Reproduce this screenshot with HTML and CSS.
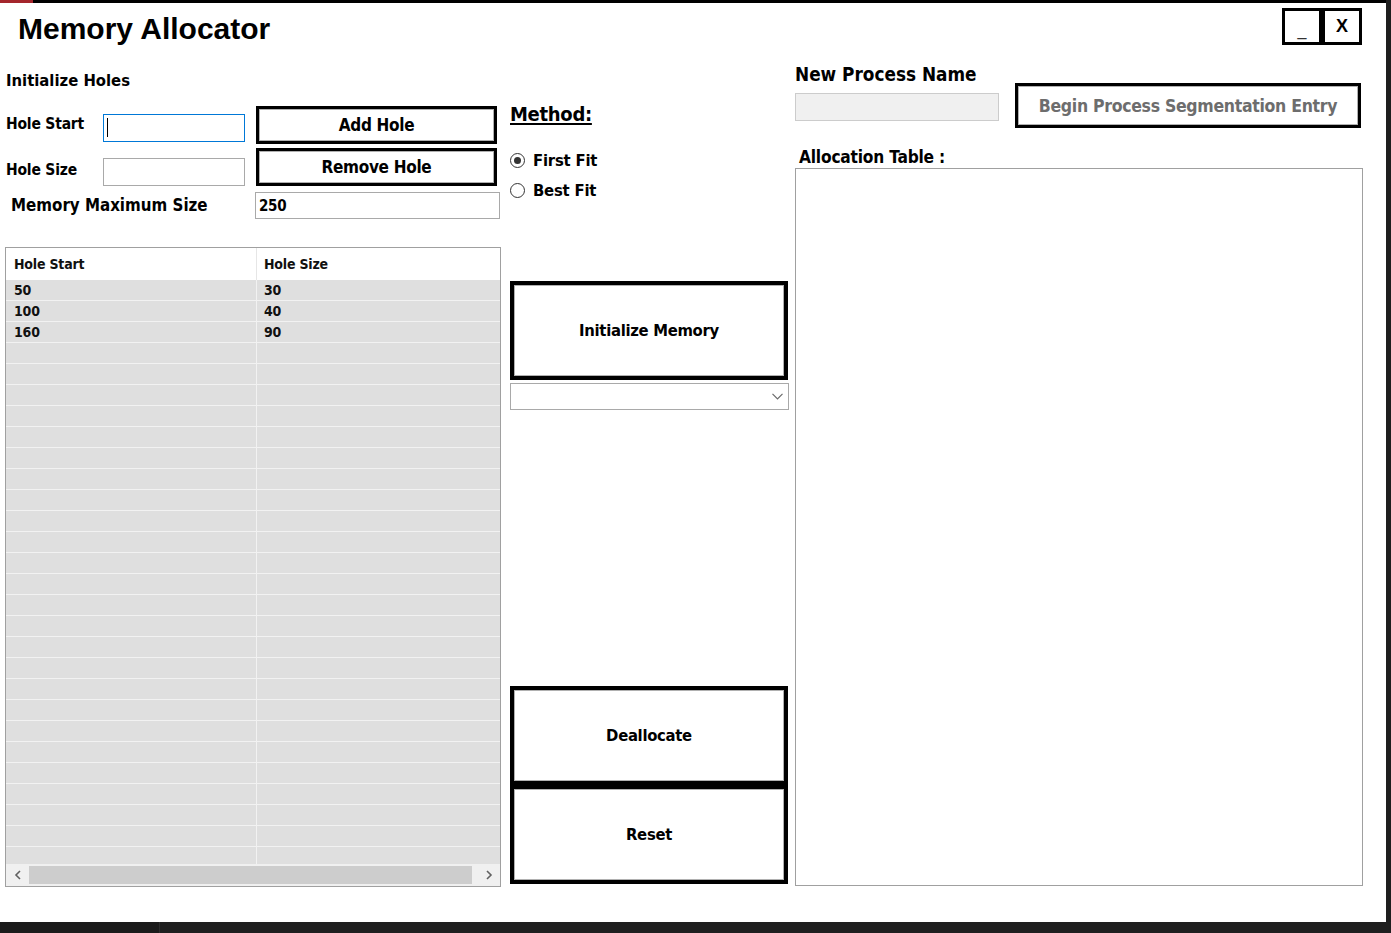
FILE: index.html
```html
<!DOCTYPE html>
<html lang="en">
<head>
<meta charset="utf-8">
<title>Memory Allocator</title>
<link rel="stylesheet" href="styles.css">
</head>
<body>
<div class="screen">
  <div class="window">
    <div class="accent"><span class="accent-red"></span></div>
    <header class="titlebar">
      <h1 class="title">Memory Allocator</h1>
      <div class="winbtns">
        <button class="winbtn">_</button>
        <button class="winbtn winbtn-close">X</button>
      </div>
    </header>
    <main class="content">
      <section class="col-left">
        <h2 class="section-title">Initialize Holes</h2>
        <div class="hole-form">
          <label class="lbl lbl-start">Hole Start</label>
          <div class="input input-start"><span class="caret"></span></div>
          <button class="btn btn-small">Add Hole</button>
          <label class="lbl lbl-size">Hole Size</label>
          <div class="input input-size"></div>
          <button class="btn btn-small">Remove Hole</button>
          <label class="lbl lbl-max">Memory Maximum Size</label>
          <div class="input input-max">250</div>
        </div>
        <div class="listview">
          <div class="lv-header">
            <div class="lv-cell lv-c1">Hole Start</div>
            <div class="lv-cell lv-c2">Hole Size</div>
          </div>
          <div class="lv-body">
            <div class="lv-row"><div class="lv-cell lv-c1">50</div><div class="lv-cell lv-c2">30</div></div>
            <div class="lv-row"><div class="lv-cell lv-c1">100</div><div class="lv-cell lv-c2">40</div></div>
            <div class="lv-row"><div class="lv-cell lv-c1">160</div><div class="lv-cell lv-c2">90</div></div>
            <div class="lv-row"><div class="lv-cell lv-c1"></div><div class="lv-cell lv-c2"></div></div>
            <div class="lv-row"><div class="lv-cell lv-c1"></div><div class="lv-cell lv-c2"></div></div>
            <div class="lv-row"><div class="lv-cell lv-c1"></div><div class="lv-cell lv-c2"></div></div>
            <div class="lv-row"><div class="lv-cell lv-c1"></div><div class="lv-cell lv-c2"></div></div>
            <div class="lv-row"><div class="lv-cell lv-c1"></div><div class="lv-cell lv-c2"></div></div>
            <div class="lv-row"><div class="lv-cell lv-c1"></div><div class="lv-cell lv-c2"></div></div>
            <div class="lv-row"><div class="lv-cell lv-c1"></div><div class="lv-cell lv-c2"></div></div>
            <div class="lv-row"><div class="lv-cell lv-c1"></div><div class="lv-cell lv-c2"></div></div>
            <div class="lv-row"><div class="lv-cell lv-c1"></div><div class="lv-cell lv-c2"></div></div>
            <div class="lv-row"><div class="lv-cell lv-c1"></div><div class="lv-cell lv-c2"></div></div>
            <div class="lv-row"><div class="lv-cell lv-c1"></div><div class="lv-cell lv-c2"></div></div>
            <div class="lv-row"><div class="lv-cell lv-c1"></div><div class="lv-cell lv-c2"></div></div>
            <div class="lv-row"><div class="lv-cell lv-c1"></div><div class="lv-cell lv-c2"></div></div>
            <div class="lv-row"><div class="lv-cell lv-c1"></div><div class="lv-cell lv-c2"></div></div>
            <div class="lv-row"><div class="lv-cell lv-c1"></div><div class="lv-cell lv-c2"></div></div>
            <div class="lv-row"><div class="lv-cell lv-c1"></div><div class="lv-cell lv-c2"></div></div>
            <div class="lv-row"><div class="lv-cell lv-c1"></div><div class="lv-cell lv-c2"></div></div>
            <div class="lv-row"><div class="lv-cell lv-c1"></div><div class="lv-cell lv-c2"></div></div>
            <div class="lv-row"><div class="lv-cell lv-c1"></div><div class="lv-cell lv-c2"></div></div>
            <div class="lv-row"><div class="lv-cell lv-c1"></div><div class="lv-cell lv-c2"></div></div>
            <div class="lv-row"><div class="lv-cell lv-c1"></div><div class="lv-cell lv-c2"></div></div>
            <div class="lv-row"><div class="lv-cell lv-c1"></div><div class="lv-cell lv-c2"></div></div>
            <div class="lv-row"><div class="lv-cell lv-c1"></div><div class="lv-cell lv-c2"></div></div>
            <div class="lv-row"><div class="lv-cell lv-c1"></div><div class="lv-cell lv-c2"></div></div>
            <div class="lv-row"><div class="lv-cell lv-c1"></div><div class="lv-cell lv-c2"></div></div>
          </div>
          <div class="hscroll">
            <span class="hs-arrow">
              <svg width="8" height="10" viewBox="0 0 8 10"><path d="M6 1 L2 5 L6 9" fill="none" stroke="#606060" stroke-width="1.6"/></svg>
            </span>
            <span class="hs-thumb"></span>
            <span class="hs-arrow hs-arrow-right">
              <svg width="8" height="10" viewBox="0 0 8 10"><path d="M2 1 L6 5 L2 9" fill="none" stroke="#606060" stroke-width="1.6"/></svg>
            </span>
          </div>
        </div>
      </section>

      <section class="col-mid">
        <h2 class="method">Method:</h2>
        <div class="radios">
          <label class="radio"><span class="radio-dot checked"></span>First Fit</label>
          <label class="radio"><span class="radio-dot"></span>Best Fit</label>
        </div>
        <button class="btn btn-big btn-init">Initialize Memory</button>
        <div class="combo">
          <svg width="11" height="7" viewBox="0 0 11 7"><path d="M0.5 0.8 L5.5 5.8 L10.5 0.8" fill="none" stroke="#6a6a6a" stroke-width="1.2"/></svg>
        </div>
        <button class="btn btn-big btn-dealloc">Deallocate</button>
        <button class="btn btn-big">Reset</button>
      </section>

      <section class="col-right">
        <div class="process-row">
          <div class="process-name">
            <label class="lbl lbl-process">New Process Name</label>
            <div class="input input-disabled"></div>
          </div>
          <button class="btn btn-begin">Begin Process Segmentation Entry</button>
        </div>
        <h2 class="alloc-title">Allocation Table :</h2>
        <div class="alloc-box"></div>
      </section>
    </main>
  </div>
  <div class="taskbar"><span class="task-left"></span><span class="task-right"></span></div>
</div>
</body>
</html>
```

FILE: styles.css
```css
* { box-sizing: border-box; }

html, body {
  margin: 0;
  padding: 0;
  background: #1e1e1e;
}

body {
  width: 1391px;
  height: 933px;
  overflow: hidden;
  font-family: "DejaVu Sans Condensed", "DejaVu Sans", sans-serif;
  font-stretch: condensed;
  font-weight: bold;
  color: #000;
}

.screen {
  display: flex;
  flex-direction: column;
  width: 1391px;
  height: 933px;
}

.window {
  width: 1386px;
  height: 922px;
  background: #fff;
  display: flex;
  flex-direction: column;
}

.accent {
  height: 3px;
  background: #000;
  display: flex;
}
.accent-red {
  width: 33px;
  height: 3px;
  background: #a4262c;
}

.titlebar {
  height: 55px;
  display: flex;
  align-items: flex-start;
  justify-content: space-between;
  padding-left: 18px;
  padding-right: 24px;
}

.title {
  margin: 9px 0 0 0;
  font-family: "Liberation Sans", Arial, sans-serif;
  font-stretch: normal;
  font-weight: bold;
  font-size: 30px;
  line-height: 34px;
  color: #000;
}

.winbtns {
  display: flex;
  margin-top: 5px;
}

.winbtn {
  width: 40px;
  height: 37px;
  border: 3px solid #000;
  background: #fff;
  padding: 0;
  font-family: "Liberation Sans", Arial, sans-serif;
  font-stretch: normal;
  font-weight: bold;
  font-size: 18px;
  color: #000;
  display: flex;
  align-items: center;
  justify-content: center;
}
.winbtn:first-child {
  font-weight: normal;
  font-size: 16px;
  padding-top: 8px;
  color: #333;
}

.content {
  flex: 1;
  display: flex;
  padding-left: 5px;
}

/* left column */
.col-left {
  width: 496px;
  display: flex;
  flex-direction: column;
}

.section-title {
  margin: 13px 0 0 1px;
  font-size: 16.5px;
  line-height: 20px;
  font-weight: bold;
  letter-spacing: 0;
}

.hole-form {
  margin: 15px 0 0 1px;
  display: grid;
  grid-template-columns: 97px 142px 11px 241px;
  grid-template-rows: 38px 38px 29px;
  row-gap: 4px;
}

.lbl {
  font-size: 15.5px;
  line-height: 20px;
  letter-spacing: -0.2px;
}
.lbl-start { grid-column: 1; grid-row: 1; align-self: center; margin-bottom: 2px; }
.lbl-size { grid-column: 1; grid-row: 2; align-self: center; margin-top: 6px; }
.lbl-max {
  grid-column: 1 / 3;
  grid-row: 3;
  align-self: start;
  margin: 5px 0 0 5px;
  font-size: 16.8px;
  letter-spacing: 0;
  white-space: nowrap;
}

.input {
  height: 28px;
  border: 1px solid #a9a9a9;
  background: #fff;
}
.input-start {
  grid-column: 2; grid-row: 1;
  align-self: end;
  margin-bottom: 2px;
  border-color: #0078d7;
  padding: 3px 0 0 3px;
}
.caret {
  display: block;
  width: 1px;
  height: 19px;
  background: #000;
}
.input-size { grid-column: 2; grid-row: 2; align-self: end; }
.input-max {
  grid-column: 3 / 5;
  grid-row: 3;
  margin: 2px 0 0 10px;
  width: 245px;
  height: 27px;
  font-size: 15px;
  line-height: 27px;
  padding-left: 3px;
  letter-spacing: -0.3px;
}

.btn {
  border: 3px solid #000;
  background: #fff;
  font-family: inherit;
  font-stretch: condensed;
  font-weight: bold;
  color: #000;
  padding: 0;
  box-shadow: inset 0 0 0 1px #b0b0b0;
  letter-spacing: -0.3px;
}
.btn-small {
  grid-column: 4;
  height: 38px;
  font-size: 17px;
}

.listview {
  margin-top: 28px;
  width: 496px;
  height: 640px;
  border: 1px solid #a0a0a0;
  display: flex;
  flex-direction: column;
  background: #fff;
}
.lv-header {
  height: 32px;
  display: flex;
  flex-shrink: 0;
}
.lv-header .lv-cell {
  line-height: 32px;
}
.lv-cell {
  font-size: 14px;
  letter-spacing: -0.2px;
  padding-left: 8px;
  color: #111;
}
.lv-c1 {
  width: 251px;
  border-right: 1px solid #e6e6e6;
}
.lv-c2 {
  flex: 1;
  padding-left: 7px;
}
.lv-body {
  flex: 1;
  overflow: hidden;
  background: #dfdfdf;
}
.lv-row {
  display: flex;
  height: 21px;
  border-bottom: 1px solid #f2f2f2;
}
.lv-row .lv-cell {
  line-height: 21px;
}
.lv-row .lv-c1 {
  border-right-color: #f2f2f2;
}

.hscroll {
  height: 22px;
  flex-shrink: 0;
  background: #f0f0f0;
  display: flex;
  align-items: center;
}
.hs-arrow {
  width: 23px;
  height: 22px;
  display: flex;
  align-items: center;
  justify-content: center;
}
.hs-arrow-right {
  width: 28px;
  padding-left: 6px;
}
.hs-thumb {
  flex: 1;
  height: 18px;
  background: #cdcdcd;
}

/* middle column */
.col-mid {
  width: 279px;
  margin-left: 9px;
  display: flex;
  flex-direction: column;
}

.method {
  margin: 44px 0 0 0;
  font-size: 20px;
  line-height: 24px;
  text-decoration: underline;
  text-decoration-thickness: 2px;
  text-underline-offset: 2px;
  letter-spacing: -0.3px;
}

.radios {
  margin-top: 24px;
  display: flex;
  flex-direction: column;
  gap: 10px;
}
.radio {
  height: 20px;
  display: flex;
  align-items: center;
  gap: 8px;
  font-size: 16.5px;
  letter-spacing: -0.2px;
}
.radio-dot {
  width: 15px;
  height: 15px;
  border: 1px solid #333;
  border-radius: 50%;
  background: #fff;
  display: flex;
  align-items: center;
  justify-content: center;
}
.radio-dot.checked::after {
  content: "";
  width: 7px;
  height: 7px;
  border-radius: 50%;
  background: #333;
}

.btn-big {
  width: 278px;
  height: 99px;
  font-size: 16.5px;
  border-width: 4px;
}
.btn-init { margin-top: 81px; }

.combo {
  margin-top: 3px;
  width: 279px;
  height: 27px;
  border: 1px solid #a9a9a9;
  background: #fff;
  display: flex;
  align-items: center;
  justify-content: flex-end;
  padding-right: 5px;
}

.btn-dealloc { margin-top: 276px; }

/* right column */
.col-right {
  width: 568px;
  margin-left: 6px;
  display: flex;
  flex-direction: column;
}

.process-row {
  display: flex;
  align-items: flex-start;
}
.process-name {
  width: 204px;
  margin-top: 6px;
  display: flex;
  flex-direction: column;
}
.lbl-process {
  font-size: 18.8px;
  line-height: 22px;
  letter-spacing: 0;
  white-space: nowrap;
}
.input-disabled {
  margin-top: 7px;
  height: 28px;
  background: #f0f0f0;
  border-color: #cccccc;
}
.btn-begin {
  margin: 25px 0 0 16px;
  width: 346px;
  height: 45px;
  font-size: 17.5px;
  color: #6d6d6d;
}

.alloc-title {
  margin: 18px 0 0 4px;
  font-size: 17.2px;
  line-height: 22px;
  letter-spacing: -0.2px;
}
.alloc-box {
  width: 568px;
  height: 718px;
  border: 1px solid #a0a0a0;
  background: #fff;
}

.taskbar {
  height: 11px;
  display: flex;
}
.task-left {
  width: 160px;
  background: #1b1b1b;
  border-right: 1px solid #2c2c2c;
}
.task-right {
  flex: 1;
  background: #1f1f1f;
}
```
